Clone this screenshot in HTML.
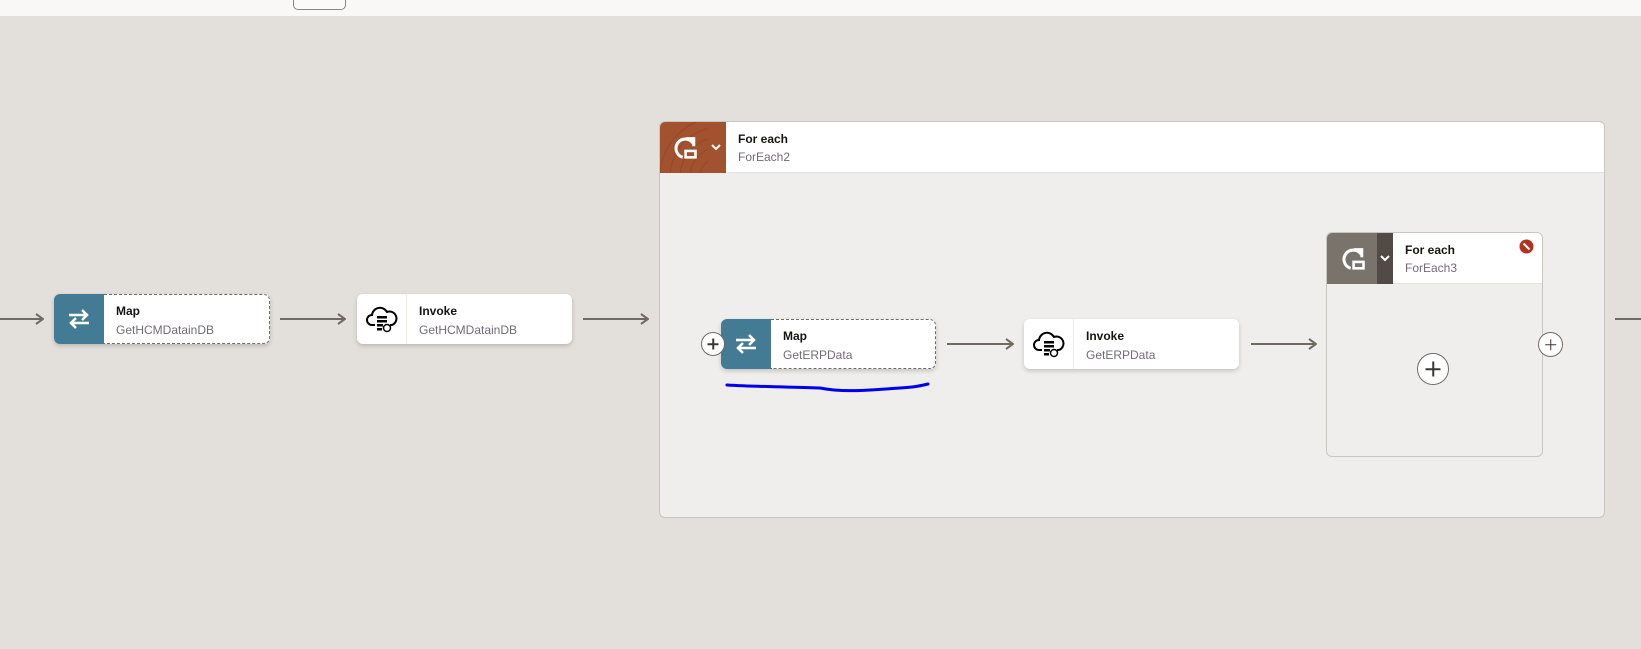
<!DOCTYPE html>
<html><head><meta charset="utf-8">
<style>
*{margin:0;padding:0;box-sizing:border-box}
body{width:1641px;height:649px;background:#e3e0db;position:relative;overflow:hidden;font-family:"Liberation Sans",sans-serif}
.abs{position:absolute}
.top{left:0;top:0;width:1641px;height:16px;background:#f9f8f6}
.tbtn{left:293px;top:-6px;width:53px;height:16px;border:1px solid #8a8580;border-radius:5px;background:#fbfaf8}
.card{position:absolute;background:#fff;border-radius:6px;box-shadow:0 2px 5px rgba(0,0,0,.18);overflow:hidden}
.card .ic{position:absolute;left:0;top:0;bottom:0;display:flex;align-items:center;justify-content:center}
.t1{position:absolute;font-size:12px;font-weight:bold;color:#161513}
.t2{position:absolute;font-size:12px;color:#716b76}
.plus{position:absolute;border:1px solid #6f6a64;border-radius:50%;background:#fff}
.plus:before,.plus:after{content:"";position:absolute;left:50%;top:50%;background:#3a3632}
.plus:before{width:50%;height:1.5px;transform:translate(-50%,-50%)}
.plus:after{width:1.5px;height:50%;transform:translate(-50%,-50%)}
</style></head><body>
<div class="abs top"></div>
<div class="abs tbtn"></div>

<svg class="abs" style="left:0;top:0" width="1641" height="649">
<defs><marker id="ah" markerWidth="10" markerHeight="12" refX="9" refY="6" orient="auto" markerUnits="userSpaceOnUse"><path d="M2 1 L9 6 L2 11" fill="none" stroke="#6f6a64" stroke-width="2"/></marker></defs>
<g stroke="#6f6a64" stroke-width="2" marker-end="url(#ah)">
<line x1="0" y1="319" x2="43" y2="319"/>
<line x1="280" y1="319" x2="345" y2="319"/>
<line x1="583" y1="319" x2="648" y2="319"/>
</g>
<line x1="1615" y1="319" x2="1641" y2="319" stroke="#6f6a64" stroke-width="2"/>
</svg>

<!-- Map 1 -->
<div class="card" style="left:54px;top:294px;width:216px;height:50px">
 <div class="ic" style="width:50px;background:#437a94">
  <svg width="24" height="20" viewBox="0 0 24 20" fill="none" stroke="#fff" stroke-width="2.5"><path d="M2 6h19M15 1l5 5-5 5M22 14H3M9 9l-5 5 5 5"/></svg>
 </div>
 <div class="abs" style="left:50px;top:0;right:0;bottom:0;border:1.5px dashed #6f6a64;border-left:none;border-radius:0 6px 6px 0"></div>
 <div class="t1" style="left:62px;top:10px">Map</div>
 <div class="t2" style="left:62px;top:29px">GetHCMDatainDB</div>
</div>

<!-- Invoke 1 -->
<div class="card" style="left:357px;top:294px;width:215px;height:50px">
 <div class="ic" style="width:50px;border-right:1px solid #eeeae6">
  <svg width="32" height="30" viewBox="0 0 32 30" fill="none" stroke="#000" stroke-width="2"><path d="M9 21H6a5 5 0 0 1 0-10a8 8 0 0 1 15-3a6 6 0 0 1 5 13h-2"/><rect x="11" y="12" width="10" height="2.5" fill="#000" stroke="none"/><rect x="11" y="16" width="10" height="2.5" fill="#000" stroke="none"/><rect x="11" y="20" width="6" height="2.5" fill="#000" stroke="none"/><rect x="11" y="24" width="5" height="2.5" fill="#000" stroke="none"/><circle cx="21" cy="24" r="3.5" stroke-width="1.5"/></svg>
 </div>
 <div class="t1" style="left:62px;top:10px">Invoke</div>
 <div class="t2" style="left:62px;top:29px">GetHCMDatainDB</div>
</div>

<!-- For each 2 -->
<div class="abs" style="left:659px;top:121px;width:946px;height:397px;background:#efeeec;border:1px solid #c9c5c0;border-radius:6px;overflow:hidden">
 <div class="abs" style="left:0;top:0;right:0;height:51px;background:#fff;border-bottom:1px solid #e6e3df"></div>
 <div class="abs" style="left:0;top:0;width:66px;height:51px;background:#a2522f;overflow:hidden">
  <svg class="abs" style="left:0;top:0" width="66" height="51" fill="none" stroke="#8f4527" stroke-width="1" opacity=".7">
   <circle cx="60" cy="55" r="20"/><circle cx="60" cy="55" r="30"/><circle cx="60" cy="55" r="40"/><circle cx="60" cy="55" r="50"/><circle cx="60" cy="55" r="60"/>
  </svg>
  <div class="abs" style="left:48px;top:0;width:18px;height:51px;background:#a2522f"></div>
  <svg class="abs" style="left:11px;top:12px" width="28" height="28" viewBox="0 0 24 24" fill="none" stroke="#fff" stroke-width="2.6"><path d="M19 8A8 8 0 1 0 10 20"/><path d="M13 4h6.5v6.5"/><rect x="12.5" y="14.5" width="8.5" height="5.5" stroke-width="2.2"/></svg>
  <svg class="abs" style="left:51px;top:22px" width="10" height="7" viewBox="0 0 10 7" fill="none" stroke="#fff" stroke-width="2"><path d="M1 1l4 4 4-4"/></svg>
 </div>
 <div class="t1" style="left:78px;top:10px">For each</div>
 <div class="t2" style="left:78px;top:28px">ForEach2</div>
</div>

<svg class="abs" style="left:0;top:0" width="1641" height="649">
<defs><marker id="ah2" markerWidth="10" markerHeight="12" refX="9" refY="6" orient="auto" markerUnits="userSpaceOnUse"><path d="M2 1 L9 6 L2 11" fill="none" stroke="#6f6a64" stroke-width="2"/></marker></defs>
<g stroke="#6f6a64" stroke-width="2" marker-end="url(#ah2)">
<line x1="947" y1="344" x2="1013" y2="344"/>
<line x1="1251" y1="344" x2="1316" y2="344"/>
</g>
</svg>

<!-- Map 2 -->
<div class="card" style="left:721px;top:319px;width:215px;height:50px">
 <div class="ic" style="width:50px;background:#437a94">
  <svg width="24" height="20" viewBox="0 0 24 20" fill="none" stroke="#fff" stroke-width="2.5"><path d="M2 6h19M15 1l5 5-5 5M22 14H3M9 9l-5 5 5 5"/></svg>
 </div>
 <div class="abs" style="left:50px;top:0;right:0;bottom:0;border:1.5px dashed #6f6a64;border-left:none;border-radius:0 6px 6px 0"></div>
 <div class="t1" style="left:62px;top:10px">Map</div>
 <div class="t2" style="left:62px;top:29px">GetERPData</div>
</div>
<div class="plus" style="left:701px;top:332px;width:24px;height:24px"></div>
<svg class="abs" style="left:720px;top:378px" width="215" height="16"><path d="M7 7 C40 9 80 9 100 10 C120 14 140 13 180 10 C195 9 200 8 208 6" fill="none" stroke="#0000ee" stroke-width="3" stroke-linecap="round"/></svg>

<!-- Invoke 2 -->
<div class="card" style="left:1024px;top:319px;width:215px;height:50px">
 <div class="ic" style="width:50px;border-right:1px solid #eeeae6">
  <svg width="32" height="30" viewBox="0 0 32 30" fill="none" stroke="#000" stroke-width="2"><path d="M9 21H6a5 5 0 0 1 0-10a8 8 0 0 1 15-3a6 6 0 0 1 5 13h-2"/><rect x="11" y="12" width="10" height="2.5" fill="#000" stroke="none"/><rect x="11" y="16" width="10" height="2.5" fill="#000" stroke="none"/><rect x="11" y="20" width="6" height="2.5" fill="#000" stroke="none"/><rect x="11" y="24" width="5" height="2.5" fill="#000" stroke="none"/><circle cx="21" cy="24" r="3.5" stroke-width="1.5"/></svg>
 </div>
 <div class="t1" style="left:62px;top:10px">Invoke</div>
 <div class="t2" style="left:62px;top:29px">GetERPData</div>
</div>

<!-- For each 3 -->
<div class="abs" style="left:1326px;top:232px;width:217px;height:225px;background:#efeeec;border:1px solid #c9c5c0;border-radius:6px;overflow:hidden">
 <div class="abs" style="left:0;top:0;right:0;height:51px;background:#fff;border-bottom:1px solid #e6e3df"></div>
 <div class="abs" style="left:0;top:0;width:50px;height:51px;background:#7a736c"></div>
 <div class="abs" style="left:50px;top:0;width:16px;height:51px;background:#524b45"></div>
 <svg class="abs" style="left:12px;top:12px" width="28" height="28" viewBox="0 0 24 24" fill="none" stroke="#fff" stroke-width="2.6"><path d="M19 8A8 8 0 1 0 10 20"/><path d="M13 4h6.5v6.5"/><rect x="12.5" y="14.5" width="8.5" height="5.5" stroke-width="2.2"/></svg>
 <svg class="abs" style="left:53px;top:22px" width="10" height="7" viewBox="0 0 10 7" fill="none" stroke="#fff" stroke-width="2"><path d="M1 1l4 4 4-4"/></svg>
 <div class="t1" style="left:78px;top:10px">For each</div>
 <div class="t2" style="left:78px;top:28px">ForEach3</div>
 <svg class="abs" style="left:192px;top:6px" width="15" height="15"><circle cx="7.5" cy="7.5" r="7" fill="#b3311f"/><path d="M4.5 4.5l6 6" stroke="#fff" stroke-width="2"/></svg>
</div>
<div class="plus" style="left:1417px;top:353px;width:32px;height:32px"></div>
<div class="plus" style="left:1538px;top:332px;width:25px;height:25px"></div>
</body></html>
